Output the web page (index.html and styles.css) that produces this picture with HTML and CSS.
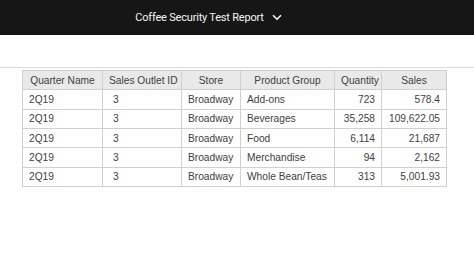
FILE: index.html
```html
<!DOCTYPE html>
<html>
<head>
<meta charset="utf-8">
<link rel="stylesheet" href="styles.css">
</head>
<body>
<header class="topbar">
  <span class="title">Coffee Security Test Report</span>
  <svg class="chev" width="10" height="7" viewBox="0 0 10 7"><path d="M1 1.2 L5 5.2 L9 1.2" fill="none" stroke="#fff" stroke-width="1.5"/></svg>
</header>
<div class="spacer"></div>
<main class="content">
  <table class="grid">
    <colgroup>
      <col style="width:80px"><col style="width:79px"><col style="width:59px"><col style="width:94px"><col style="width:47px"><col style="width:65px">
    </colgroup>
    <thead>
      <tr><th>Quarter Name</th><th>Sales Outlet ID</th><th>Store</th><th>Product Group</th><th>Quantity</th><th>Sales</th></tr>
    </thead>
    <tbody>
      <tr><td>2Q19</td><td class="id">3</td><td>Broadway</td><td>Add-ons</td><td class="num">723</td><td class="num">578.4</td></tr>
      <tr><td>2Q19</td><td class="id">3</td><td>Broadway</td><td>Beverages</td><td class="num">35,258</td><td class="num">109,622.05</td></tr>
      <tr><td>2Q19</td><td class="id">3</td><td>Broadway</td><td>Food</td><td class="num">6,114</td><td class="num">21,687</td></tr>
      <tr><td>2Q19</td><td class="id">3</td><td>Broadway</td><td>Merchandise</td><td class="num">94</td><td class="num">2,162</td></tr>
      <tr><td>2Q19</td><td class="id">3</td><td>Broadway</td><td>Whole Bean/Teas</td><td class="num">313</td><td class="num">5,001.93</td></tr>
    </tbody>
  </table>
</main>
</body>
</html>
```
FILE: styles.css
```css
html, body { margin: 0; padding: 0; background: #fff; }
body { width: 474px; height: 259px; overflow: hidden; }
.topbar {
  height: 35px;
  background: #161616;
  display: flex;
  align-items: center;
  justify-content: center;
  gap: 8px;
  padding-right: 57px;
  box-sizing: border-box;
}
.title {
  color: #f4f4f4;
  font-family: Roboto, "Liberation Sans", sans-serif;
  font-size: 11px;
  letter-spacing: -0.2px;
}
.chev { display: block; }
.spacer { height: 32px; border-bottom: 1px solid #dcdcdc; }
.content { padding: 2px 0 0 22px; }
.grid {
  border-collapse: collapse;
  table-layout: fixed;
  width: 425px;
  font-family: "Liberation Sans", Arial, sans-serif;
  font-size: 10.2px;
  color: #404040;
}
.grid th, .grid td {
  border: 1px solid #d0d0d0;
  height: 18.35px;
  padding: 0 6px;
  white-space: nowrap;
  overflow: hidden;
}
.grid th { background: #e9e9e9; font-weight: normal; text-align: center; }
.grid td { text-align: left; }
.grid td.id { padding-left: 10px; }
.grid td.num { text-align: right; }
```
